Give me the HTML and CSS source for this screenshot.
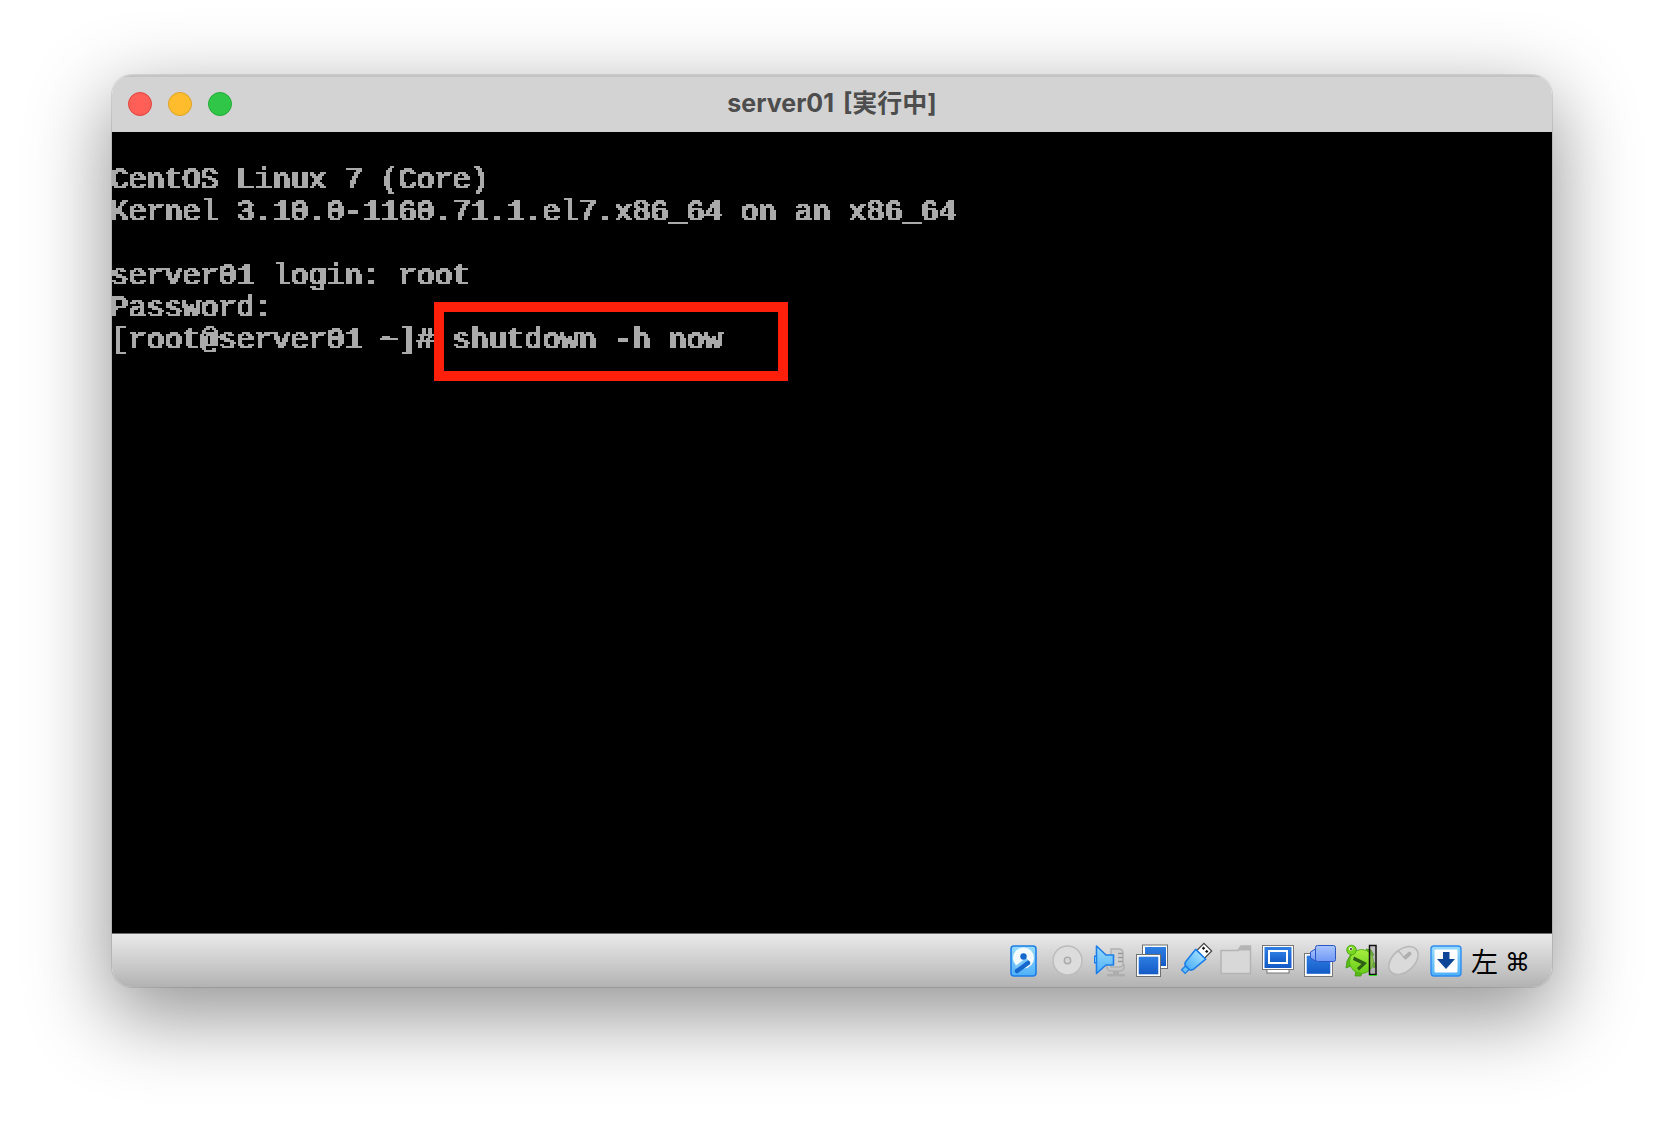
FILE: index.html
```html
<!DOCTYPE html>
<html lang="ja">
<head>
<meta charset="utf-8">
<title>server01 [実行中]</title>
<link rel="stylesheet" href="styles.css">
</head>
<body>
<svg class="defs" width="0" height="0" aria-hidden="true">
  <defs>
    <linearGradient id="sky" x1="0" y1="0" x2="0" y2="1"><stop offset="0" stop-color="#9adcff"/><stop offset="1" stop-color="#4fb0f8"/></linearGradient>
    <linearGradient id="royal" x1="0" y1="0" x2="0" y2="1"><stop offset="0" stop-color="#2f80e4"/><stop offset="1" stop-color="#1258c4"/></linearGradient>
    <linearGradient id="lav" x1="0" y1="0" x2="0" y2="1"><stop offset="0" stop-color="#a9c4ff"/><stop offset="1" stop-color="#6f98f4"/></linearGradient>
    <linearGradient id="lime" x1="0" y1="0" x2="0" y2="1"><stop offset="0" stop-color="#a8ee40"/><stop offset="1" stop-color="#66cc18"/></linearGradient>
    <filter id="vga" x="0" y="0" width="100%" height="100%" color-interpolation-filters="sRGB">
      <feMorphology in="SourceGraphic" operator="dilate" radius="1 0" result="wide"/>
      <feFlood x="0" y="0" width="1" height="1" flood-color="#000"/>
      <feComposite width="2" height="2"/>
      <feTile result="grid"/>
      <feComposite in="wide" in2="grid" operator="in"/>
      <feConvolveMatrix order="2" kernelMatrix="1 1 1 1" divisor="1" targetX="1" targetY="1" preserveAlpha="false"/>
      <feComponentTransfer><feFuncA type="discrete" tableValues="0 1 1"/></feComponentTransfer>
      <feOffset dx="-2" dy="-1"/>
    </filter>
  </defs>
</svg>
<main class="window">
  <header class="titlebar">
    <div class="lights">
      <span class="light light-close"></span>
      <span class="light light-min"></span>
      <span class="light light-max"></span>
    </div>
    <h1 class="title">server01 [実行中]</h1>
  </header>
  <section class="screen">
    <pre class="console">CentOS Linux 7 (Core)
Kernel 3.10.0-1160.71.1.el7.x86_64 on an x86_64

server01 login: root
Password:
[root@server01 ~]# shutdown -h now</pre>
    <div class="highlight"></div>
  </section>
  <footer class="statusbar">
    <svg class="icon" viewBox="0 0 32 32"><rect x="1" y="1" width="25" height="30" rx="3" fill="url(#sky)" stroke="#1d7ee8" stroke-width="1.6"/><circle cx="13.5" cy="13" r="10.5" fill="#f4fbff"/><path d="M4 22a10.500 10.500 0 0 0 6 2l10-7-4-4z" fill="#7cc8fb"/><circle cx="13.500" cy="11.500" r="3.200" fill="#1768cc"/><path d="M18 18 7 26" stroke="#1768cc" stroke-width="4.500" stroke-linecap="round"/></svg>
    <svg class="icon" viewBox="0 0 32 32"><circle cx="15.500" cy="15.500" r="14.500" fill="#dcdcdc" stroke="#bcbcbc" stroke-width="1.500"/><circle cx="15.500" cy="15.500" r="3.200" fill="#d6d6d6" stroke="#acacac" stroke-width="1.500"/></svg>
    <svg class="icon" viewBox="0 0 32 32"><path d="M17 4h8q4 0 4 4v10q0 4-4 4h-8z" fill="#d0d0d0" stroke="#b0b0b0" stroke-width="1.400"/><path d="M24 8.500h5M24 12.500h5M24 16.500h5" stroke="#999" stroke-width="1.500"/><path d="M13 19v3q0 4 4 4h8q5 0 5-4v-3" fill="none" stroke="#b0b0b0" stroke-width="1.600"/><path d="M19 26h6v3h-6zM13 29h18v2.500H13z" fill="#adadad"/><path d="M2.500 1 12 10h7.500v10H12l-9.500 8.500z" fill="url(#sky)" stroke="#1d7ee8" stroke-width="1.600" stroke-linejoin="round"/><rect x="0.500" y="11" width="2" height="7" fill="#6cc0fa" stroke="#1d7ee8"/></svg>
    <svg class="icon" viewBox="0 0 32 32"><rect x="8" y="1" width="23" height="21" fill="url(#royal)" stroke="#fff" stroke-width="2"/><rect x="6.500" y="0" width="25" height="23.500" fill="none" stroke="#6f6f6f" stroke-width="1"/><rect x="1.500" y="10.500" width="22" height="20" fill="url(#royal)" stroke="#fff" stroke-width="2.400"/><rect x="0.500" y="9.500" width="24" height="22" fill="none" stroke="#6f6f6f" stroke-width="1"/></svg>
    <svg class="icon" viewBox="0 0 32 32"><g transform="rotate(45 16 16)"><rect x="10.500" y="-3.500" width="11" height="10" fill="#fff" stroke="#444" stroke-width="1.200"/><rect x="12.500" y="-1" width="2.400" height="2.400" fill="#111"/><rect x="17" y="-1" width="2.400" height="2.400" fill="#111"/><path d="M9 6.500h14l-1.500 15q-.4 4-4 4h-3q-3.600 0-4-4z" fill="url(#sky)" stroke="#1d7ee8" stroke-width="1.600" stroke-linejoin="round"/><rect x="13.500" y="25.500" width="5" height="5.500" fill="#6cc0fa" stroke="#1d7ee8" stroke-width="1.400"/></g></svg>
    <svg class="icon" viewBox="0 0 32 32"><path d="M1 5.500h17l3-4.500h9.500v27.500H1z" fill="#d8d8d8" stroke="#b4b4b4" stroke-width="1.500" stroke-linejoin="round"/><path d="M18 5.500 21 1h9.500v4.500z" fill="#b4b4b4"/></svg>
    <svg class="icon" viewBox="0 0 32 32"><rect x="5" y="23" width="22" height="5" fill="#fff" stroke="#777"/><rect x="1.500" y="1" width="29" height="23" fill="url(#royal)" stroke="#fff" stroke-width="2"/><rect x="0.500" y="0.500" width="31" height="24" fill="none" stroke="#777"/><rect x="7" y="6" width="18" height="12" fill="url(#royal)" stroke="#fff" stroke-width="2"/></svg>
    <svg class="icon" viewBox="0 0 32 32"><rect x="1.500" y="9.500" width="26" height="20.500" fill="url(#royal)" stroke="#fff" stroke-width="2.400"/><rect x="0.500" y="8.500" width="28" height="23" fill="none" stroke="#777"/><path d="M6.500 7 11.500 4v12l-5-3z" fill="url(#lav)" stroke="#2c56c4" stroke-linejoin="round"/><rect x="11.500" y="0.500" width="20" height="16" rx="2" fill="url(#lav)" stroke="#2c56c4"/></svg>
    <svg class="icon" viewBox="0 0 32 32"><path d="M5 9 1 16l-1 7 5-2zM20 4l5 1 3 5-4 1zM26 16l4 3-1 4-4-2zM10 26l-1 5h6l1-4z" fill="#58bc14" stroke="#3e9a0c" stroke-width=".8"/><ellipse cx="15.500" cy="16.500" rx="12" ry="12" fill="url(#lime)" stroke="#4aa510" stroke-width=".8"/><circle cx="5.500" cy="5" r="4.800" fill="#7ad820" stroke="#3e9a0c" stroke-width=".8"/><circle cx="4.800" cy="3.800" r="1.800" fill="#fff"/><circle cx="5" cy="4" r=".9" fill="#111"/><path d="M8 11.500 21 18l-8 7.500-2-2.500 4.500-4-8.500-4z" fill="#2c5f14"/><rect x="23.500" y="0.500" width="6.500" height="29" fill="#8c8c8c" fill-opacity=".35" stroke="#111" stroke-width="1.500"/><path d="M23 30.500h8" stroke="#2bdc1e"/></svg>
    <svg class="icon" viewBox="0 0 32 32"><ellipse cx="15.500" cy="15.500" rx="11" ry="17" transform="rotate(48 15.500 15.500)" fill="#dadada" stroke="#b8b8b8" stroke-width="1.500"/><path d="M9 5.500q4 2 7 7.500" fill="none" stroke="#b8b8b8" stroke-width="1.400"/><rect x="17.500" y="6" width="4" height="9" rx="1.500" transform="rotate(48 19.500 10.500)" fill="#b0b0b0"/></svg>
    <svg class="icon" viewBox="0 0 32 32"><rect x="1" y="1" width="30" height="30" rx="3" fill="url(#sky)" stroke="#2c8cf0" stroke-width="1.400"/><rect x="4.500" y="4.500" width="23" height="23" rx="1" fill="#fff"/><path d="M13 7h6.500v7H25l-9 10-9-10h6z" fill="#0f4596"/></svg>
    <span class="hostkey">左</span>
    <span class="cmd">⌘</span>
  </footer>
</main>
</body>
</html>
```
FILE: styles.css
```css
* { box-sizing: border-box; }
html, body { margin: 0; height: 100%; }
body {
  background: #fff;
  padding: 75px 112px 147px;
  height: 1134px;
  overflow: hidden;
}
.defs { position: absolute; }
.window {
  height: 912px;
  display: flex;
  flex-direction: column;
  border-radius: 20px;
  overflow: hidden;
  box-shadow: 0 0 0 1px rgba(0,0,0,.1), 0 26px 80px 4px rgba(0,0,0,.42);
}
.titlebar {
  height: 57px;
  flex: none;
  background: #d3d3d3;
  border-top: 2px solid #c4c4c4;
  padding-bottom: 2px;
  display: grid;
  grid-template-columns: 1fr auto 1fr;
  align-items: center;
}
.lights { display: flex; gap: 16px; padding-left: 16px; }
.light { width: 24px; height: 24px; border-radius: 50%; border: 1px solid; }
.light-close { background: #ff5f57; border-color: #e0443e; }
.light-min { background: #ffbd2e; border-color: #dea123; }
.light-max { background: #30c748; border-color: #24a93a; }
.title {
  margin: 0;
  font: 700 25px/1 Inter, "Noto Sans CJK JP", sans-serif;
  word-spacing: 3px;
  color: #4d4d4d;
}
.screen {
  flex: 1;
  background: #000;
  position: relative;
  padding-top: 33px;
}
.console {
  margin: 0;
  font: 30px/32px "Liberation Mono", monospace;
  color: #aaa;
  filter: url(#vga);
}
.highlight {
  position: absolute;
  left: 322px;
  top: 170px;
  width: 354px;
  height: 79px;
  border: 10px solid #ff200c;
}
.statusbar {
  height: 54px;
  flex: none;
  background: linear-gradient(#e9e9e9, #dcdcdc 25%, #c4c4c4 70%, #b2b2b2);
  border-top: 1px solid #6f6f6f;
  display: flex;
  justify-content: flex-end;
  align-items: center;
  gap: 10px;
  padding: 1px 22px 0 0;
}
.icon { width: 32px; height: 32px; flex: none; overflow: visible; }
.hostkey {
  margin-left: -1px;
  font: 400 27px/32px "Noto Sans CJK JP", sans-serif;
  color: #000;
}
.cmd {
  margin-left: -3px;
  padding-top: 3px;
  font: 400 25px/32px "DejaVu Sans", sans-serif;
  color: #000;
}
```
